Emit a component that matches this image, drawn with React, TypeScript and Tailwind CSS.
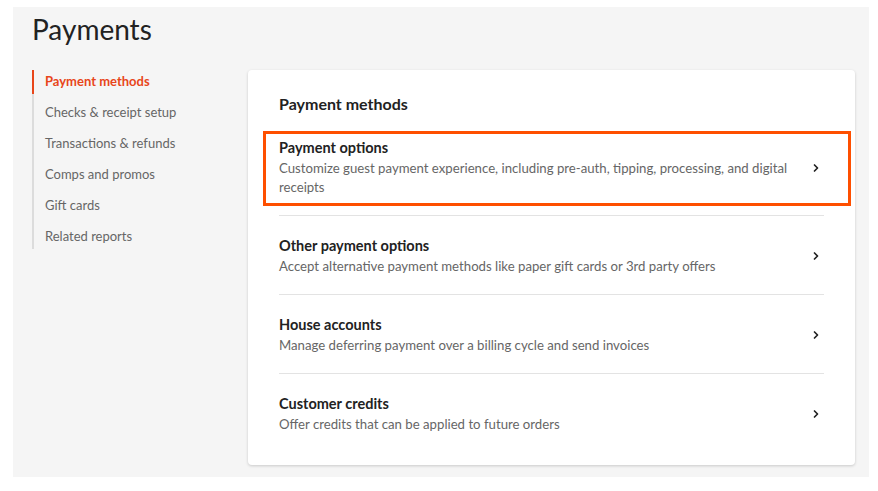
import React from "react";

const nav = [
  "Payment methods",
  "Checks & receipt setup",
  "Transactions & refunds",
  "Comps and promos",
  "Gift cards",
  "Related reports",
];

const rows = [
  {
    title: "Payment options",
    desc: "Customize guest payment experience, including pre-auth, tipping, processing, and digital receipts",
  },
  {
    title: "Other payment options",
    desc: "Accept alternative payment methods like paper gift cards or 3rd party offers",
  },
  {
    title: "House accounts",
    desc: "Manage deferring payment over a billing cycle and send invoices",
  },
  {
    title: "Customer credits",
    desc: "Offer credits that can be applied to future orders",
  },
];

function Chevron() {
  return (
    <svg width="16" height="16" viewBox="0 0 16 16" fill="none" className="shrink-0">
      <path d="M6.5 5 L9.5 8 L6.5 11" stroke="#222" strokeWidth="1.7" strokeLinecap="round" strokeLinejoin="round" />
    </svg>
  );
}

export default function App() {
  return (
    <div className="min-h-screen bg-white pt-[7px] pl-[13px]" style={{ fontFamily: "Lato, 'Noto Sans', sans-serif" }}>
      <div className="bg-[#f5f5f5] w-[856px] h-[470px] pl-[19px]">
        <h1 className="text-[28px] leading-[36px] text-[#222] pt-[4px] m-0 font-normal">Payments</h1>
        <div className="flex mt-[22px]">
          <nav className="w-[216px] shrink-0 pt-[1px]">
            <ul className="flex flex-col gap-[7px] border-l-2 border-[#dcdcdc] w-fit">
              {nav.map((n, i) => (
                <li
                  key={n}
                  className={
                    "h-[24px] flex items-center pl-[11px] -ml-[2px] border-l-2 text-[13px] " +
                    (i === 0 ? "border-[#e8461a] text-[#e8461a] font-bold" : "border-transparent text-[#666]")
                  }
                >
                  {n}
                </li>
              ))}
            </ul>
          </nav>
          <div className="mt-[1px] w-[607px] h-[395px] bg-white rounded-[4px] shadow-[0_1px_3px_rgba(0,0,0,0.18)] px-[31px] pt-[24px]">
            <h2 className="text-[16px] leading-[20px] font-bold text-[#222]">Payment methods</h2>
            <div className="mt-[4px]">
              {rows.map((r, i) => (
                <div
                  key={r.title}
                  className={"relative flex items-center justify-between pt-[20px] pb-[18px] " + (i < rows.length - 1 ? "border-b border-[#e3e3e3]" : "")}
                >
                  {i === 0 && (
                    <div className="absolute left-[-16px] right-[-27px] top-[13px] bottom-[9px] border-[3px] border-[#fe4f00] pointer-events-none" />
                  )}
                  <div className="pr-[20px]">
                    <div className="text-[14.5px] leading-[20px] font-bold text-[#222]">{r.title}</div>
                    <div className="text-[13.2px] leading-[19px] text-[#666] mt-[1px]">{r.desc}</div>
                  </div>
                  <Chevron />
                </div>
              ))}
            </div>
          </div>
        </div>
      </div>
    </div>
  );
}
